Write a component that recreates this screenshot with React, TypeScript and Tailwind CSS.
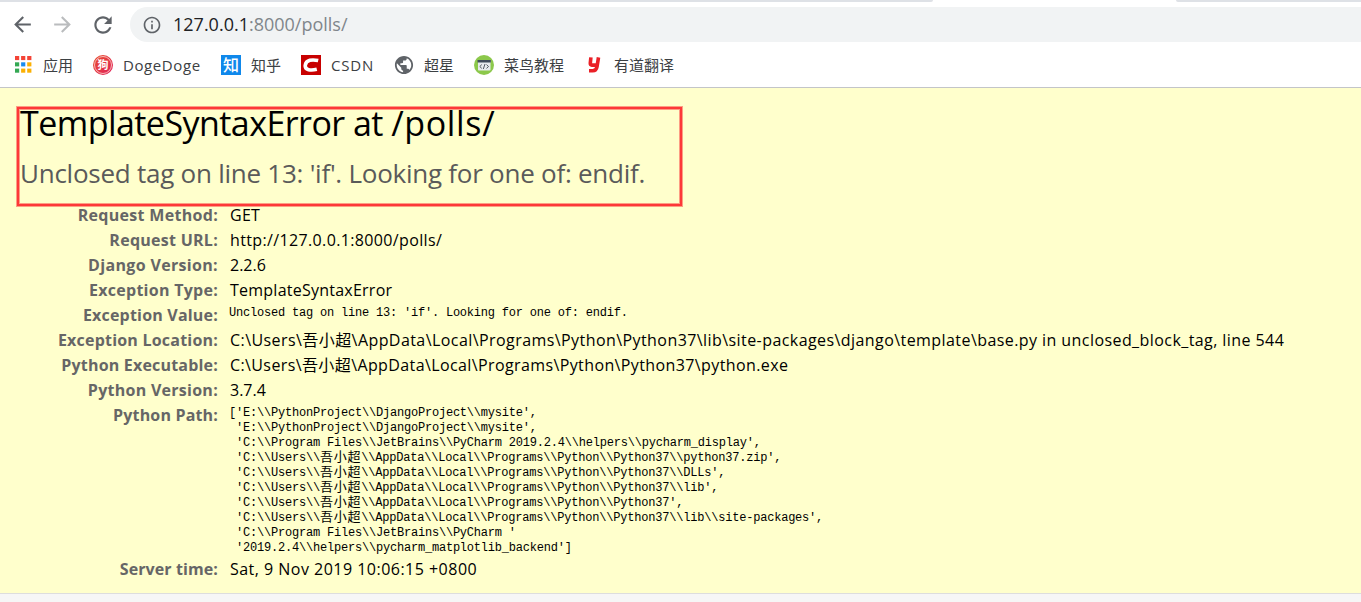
import type { ReactNode } from 'react';

const rows: { label: string; labelClass: string; value: ReactNode; valueClass: string }[] = [
  { label: 'Request Method:', labelClass: 'tracking-[0.3px]', value: 'GET', valueClass: 'tracking-[0.3px]' },
  { label: 'Request URL:', labelClass: 'tracking-[0.27px]', value: 'http://127.0.0.1:8000/polls/', valueClass: 'tracking-[0.36px]' },
  { label: 'Django Version:', labelClass: 'tracking-[0.33px]', value: '2.2.6', valueClass: '' },
  { label: 'Exception Type:', labelClass: 'tracking-[0.27px]', value: 'TemplateSyntaxError', valueClass: 'tracking-[0.24px]' },
  {
    label: 'Exception Value:',
    labelClass: 'tracking-[0.2px]',
    value: <Pre lines={["Unclosed tag on line 13: 'if'. Looking for one of: endif."]} />,
    valueClass: '',
  },
  {
    label: 'Exception Location:',
    labelClass: 'tracking-[0.21px]',
    value: 'C:\\Users\\吾小超\\AppData\\Local\\Programs\\Python\\Python37\\lib\\site-packages\\django\\template\\base.py in unclosed_block_tag, line 544',
    valueClass: 'tracking-[0.428px]',
  },
  {
    label: 'Python Executable:',
    labelClass: 'tracking-[0.19px]',
    value: 'C:\\Users\\吾小超\\AppData\\Local\\Programs\\Python\\Python37\\python.exe',
    valueClass: 'tracking-[0.39px]',
  },
  { label: 'Python Version:', labelClass: 'tracking-[0.27px]', value: '3.7.4', valueClass: '' },
];

const pythonPath = [
  "['E:\\\\PythonProject\\\\DjangoProject\\\\mysite',",
  " 'E:\\\\PythonProject\\\\DjangoProject\\\\mysite',",
  " 'C:\\\\Program Files\\\\JetBrains\\\\PyCharm 2019.2.4\\\\helpers\\\\pycharm_display',",
  " 'C:\\\\Users\\\\吾小超\\\\AppData\\\\Local\\\\Programs\\\\Python\\\\Python37\\\\python37.zip',",
  " 'C:\\\\Users\\\\吾小超\\\\AppData\\\\Local\\\\Programs\\\\Python\\\\Python37\\\\DLLs',",
  " 'C:\\\\Users\\\\吾小超\\\\AppData\\\\Local\\\\Programs\\\\Python\\\\Python37\\\\lib',",
  " 'C:\\\\Users\\\\吾小超\\\\AppData\\\\Local\\\\Programs\\\\Python\\\\Python37',",
  " 'C:\\\\Users\\\\吾小超\\\\AppData\\\\Local\\\\Programs\\\\Python\\\\Python37\\\\lib\\\\site-packages',",
  " 'C:\\\\Program Files\\\\JetBrains\\\\PyCharm '",
  " '2019.2.4\\\\helpers\\\\pycharm_matplotlib_backend']",
];

function Pre({ lines }: { lines: string[] }) {
  return (
    <pre className="-ml-px pt-[3px] font-['Liberation_Mono','Noto_Sans_CJK_SC',monospace] text-[12px] leading-[15px] tracking-[-0.205px]">
      {lines.map((line, i) => (
        <div key={i} className="h-[15px]">
          {line.split(/(吾小超)/).map((part, j) =>
            part === '吾小超' ? (
              <span key={j} className="text-[13px] leading-none tracking-[0.8px]">{part}</span>
            ) : (
              part
            )
          )}
        </div>
      ))}
    </pre>
  );
}

function Row({ label, labelClass = '', valueClass = '', height = 'h-[25px]', children }: {
  label: string;
  labelClass?: string;
  valueClass?: string;
  height?: string;
  children: ReactNode;
}) {
  return (
    <div className={`grid grid-cols-[198px_1fr] gap-x-3 text-base leading-[25px] whitespace-nowrap ${height}`}>
      <div className={`text-right font-bold text-[#666] ${labelClass}`}>{label}</div>
      <div className={valueClass}>{children}</div>
    </div>
  );
}

function AppsIcon() {
  const colors = ['#f44336', '#f44336', '#f44336', '#34a853', '#1a8cf0', '#fbb003', '#34a853', '#fbb003', '#fbb003'];
  return (
    <svg width="20" height="20" viewBox="0 0 20 20">
      {colors.map((color, i) => (
        <rect key={i} x={2 + (i % 3) * 6.1} y={1 + Math.floor(i / 3) * 6.3} width="4.2" height="4.1" fill={color} />
      ))}
    </svg>
  );
}

function DogeIcon() {
  return (
    <svg className="overflow-visible" width="20" height="20" viewBox="0 0 20 20">
      <defs>
        <linearGradient id="doge" x1="0" y1="0" x2="1" y2="1">
          <stop offset="0" stopColor="#e8502c" />
          <stop offset="1" stopColor="#e0205f" />
        </linearGradient>
      </defs>
      <circle cx="10" cy="10" r="10" fill="url(#doge)" />
      <circle cx="10" cy="10" r="8.5" fill="none" stroke="#f8c9c4" strokeWidth="0.9" />
      <text x="10" y="14" textAnchor="middle" fontSize="11" fontWeight="700" fill="#fff" fontFamily="Noto Sans CJK SC">狗</text>
    </svg>
  );
}

function ZhihuIcon() {
  return (
    <svg className="overflow-visible" width="20" height="20" viewBox="0 0 20 20">
      <rect width="20" height="20" fill="#0f88eb" />
      <text x="10" y="15.8" textAnchor="middle" fontSize="16" fontWeight="500" fill="#fff" fontFamily="Noto Sans CJK SC">知</text>
    </svg>
  );
}

function CsdnIcon() {
  return (
    <svg width="20" height="20" viewBox="0 0 20 20">
      <rect width="20" height="20" fill="#c80000" />
      <path d="M17.2 5.6C11.5 4.3 5 4.6 4.2 10.4c-.5 4.6 5.5 5.400 11.6 3.900" fill="none" stroke="#fff" strokeWidth="3.6" />
    </svg>
  );
}

function GlobeIcon() {
  return (
    <svg width="20" height="20" viewBox="1 1 22 22" fill="#5f6368">
      <path d="M12 2C6.480 2 2 6.480 2 12s4.480 10 10 10 10-4.480 10-10S17.520 2 12 2zm-1 17.930c-3.950-.490-7-3.850-7-7.930 0-.620.080-1.210.210-1.790L9 15v1c0 1.100.900 2 2 2v1.930zm6.900-2.540c-.260-.810-1-1.390-1.900-1.390h-1v-3c0-.550-.450-1-1-1H8v-2h2c.550 0 1-.450 1-1V7h2c1.100 0 2-.900 2-2v-.410c2.930 1.190 5 4.060 5 7.410 0 2.080-.800 3.970-2.100 5.390z" />
    </svg>
  );
}

function RunoobIcon() {
  return (
    <svg width="20" height="20" viewBox="0 0 20 20">
      <circle cx="10" cy="10" r="10" fill="#8cc84b" />
      <rect x="4" y="5" width="12.5" height="10.5" rx="0.8" fill="#e6e9ed" />
      <path d="M3.500 5h13.300v2.500H3.500z" fill="#3f4a5a" />
      <path d="M7.800 9.600 5.800 11.500 7.800 13.400M12.500 9.600l2 1.900-2 1.900M11 9l-1.700 5" fill="none" stroke="#434a54" strokeWidth="0.9" />
    </svg>
  );
}

function YoudaoIcon() {
  return (
    <svg width="20" height="20" viewBox="0 0 20 20">
      <path d="M6.900 2.400 6.300 8.200c-.1 1.400.4 1.900 1.500 1.900h4.200M14.500 2.400l-1.500 9.400c-.5 3-1.600 4-4.300 4H5" fill="none" stroke="#ea2027" strokeWidth="3.6" />
    </svg>
  );
}

const bookmarks = [
  { name: '应用', icon: <AppsIcon />, className: 'w-20', text: '' },
  { name: 'DogeDoge', icon: <DogeIcon />, className: 'w-32', text: 'tracking-[0.6px]' },
  { name: '知乎', icon: <ZhihuIcon />, className: 'w-20', text: '' },
  { name: 'CSDN', icon: <CsdnIcon />, className: 'w-[93px]', text: 'tracking-[0.8px]' },
  { name: '超星', icon: <GlobeIcon />, className: 'w-20', text: '' },
  { name: '菜鸟教程', icon: <RunoobIcon />, className: 'w-[110px]', text: '' },
  { name: '有道翻译', icon: <YoudaoIcon />, className: 'w-[110px]', text: '' },
];

function Toolbar() {
  return (
    <div className="flex h-[35px] items-center">
      <svg className="ml-2.5 shrink-0" width="25" height="25" viewBox="0 0 24 24" fill="#5f6368">
        <path d="M20 11H7.830l5.590-5.590L12 4l-8 8 8 8 1.410-1.410L7.830 13H20v-2z" />
      </svg>
      <svg className="ml-[15px] shrink-0" width="25" height="25" viewBox="0 0 24 24" fill="#babcbe">
        <path d="M12 4l-1.410 1.410L16.170 11H4v2h12.170l-5.580 5.590L12 20l8-8z" />
      </svg>
      <svg className="ml-[15px] shrink-0" width="26" height="26" viewBox="0 0 24 24" fill="#5f6368">
        <path d="M17.650 6.350C16.200 4.900 14.210 4 12 4c-4.420 0-7.990 3.580-7.990 8s3.570 8 7.990 8c3.730 0 6.840-2.550 7.730-6h-2.080c-.82 2.330-3.040 4-5.650 4-3.310 0-6-2.690-6-6s2.690-6 6-6c1.660 0 3.140.69 4.220 1.780L13 11h7V4l-2.350 2.350z" />
      </svg>
      <div className="ml-3.5 flex h-[35px] flex-1 items-center rounded-l-full bg-[#f1f3f4] pl-3">
        <svg width="20" height="20" viewBox="0 0 24 24" fill="#5f6368">
          <path d="M11 17h2v-6h-2v6zm1-15C6.480 2 2 6.480 2 12s4.480 10 10 10 10-4.480 10-10S17.520 2 12 2zm0 18c-4.410 0-8-3.590-8-8s3.590-8 8-8 8 3.590 8 8-3.590 8-8 8zM11 9h2V7h-2v2z" />
        </svg>
        <span className="ml-[11px] text-[18px] leading-[35px] text-[#202124]">
          127.0.0.1<span className="text-[#80868b]">:8000/polls/</span>
        </span>
      </div>
    </div>
  );
}

export default function App() {
  return (
    <div className="flex h-[602px] w-[1361px] flex-col overflow-hidden bg-white font-['Open_Sans','Noto_Sans_CJK_SC',sans-serif] text-black">
      {/* Bottom edge of the tab strip */}
      <div className="flex h-[2px] shrink-0 justify-between">
        <div className="w-[933px] rounded-br-[2px] bg-[#dee1e6]" />
        <div className="w-[185px] rounded-bl-[2px] bg-[#dee1e6]" />
      </div>

      <div className="h-[85px] shrink-0 pt-[5px]">
        <Toolbar />
        <div className="mt-[13px] flex h-5 items-center pl-[13px] text-[15px] leading-5 whitespace-nowrap text-[#3c4043]">
          {bookmarks.map((b) => (
            <div key={b.name} className={`flex items-center gap-2.5 ${b.className}`}>
              {b.icon}
              <span className={b.text}>{b.name}</span>
            </div>
          ))}
        </div>
      </div>

      {/* Debug page summary */}
      <main className="relative h-[506px] shrink-0 border-t border-[#c3c5c8] bg-[#ffffcc] pl-5">
        <div className="absolute top-[18px] left-4 h-[101px] w-[667px] border border-[#fd9d83]">
          <div className="h-full border-2 border-[#fd3838]">
            <div className="h-full border border-[#fd9d83]" />
          </div>
        </div>
        <h1 className="relative pt-[10px] text-[34px] leading-[50px] tracking-[-0.55px] whitespace-nowrap">
          TemplateSyntaxError at <span className="tracking-[0.65px]">/polls/</span>
        </h1>
        <h2 className="mt-px text-[26px] leading-[48px] tracking-[-0.25px] whitespace-nowrap text-[#5a5a5a]">
          Unclosed tag on line 13: 'if'. Looking for one of: endif.
        </h2>
        <div className="mt-1.5">
          {rows.map((row) => (
            <Row key={row.label} label={row.label} labelClass={row.labelClass} valueClass={row.valueClass}>
              {row.value}
            </Row>
          ))}
          <Row label="Python Path:" labelClass="tracking-[0.17px]" height="h-[154px]">
            <Pre lines={pythonPath} />
          </Row>
          <Row label="Server time:" labelClass="tracking-[0.1px]" valueClass="tracking-[0.48px]">Sat, 9 Nov 2019 10:06:15 +0800</Row>
        </div>
      </main>

      <div className="flex-1 border-t border-[#ddd] bg-[#f6f6f6]" />
    </div>
  );
}
